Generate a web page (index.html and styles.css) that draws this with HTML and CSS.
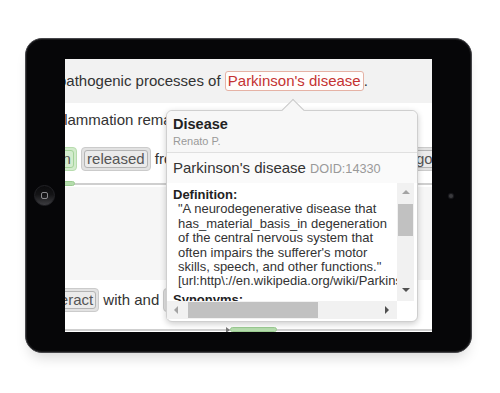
FILE: index.html
```html
<!DOCTYPE html>
<html>
<head>
<meta charset="utf-8">
<title>Annotation tablet</title>
<link rel="stylesheet" href="styles.css">
</head>
<body>
<div class="stage">
  <div class="tablet">
    <div class="bezel">
      <div class="home"><div class="home-key"></div></div>
    </div>
    <div class="screen">
      <div class="row row-1"><span class="lead-1">pathogenic processes of </span><span class="ent">Parkinson's disease</span>.</div>
      <div class="row row-2"><span class="lead-2">flammation remains a prominent feature</span></div>
      <div class="row row-3"><span class="tag tag-green lead-3"><span class="tag-in">protein</span></span> <span class="tag"><span class="tag-in">released</span></span> <span class="fill-text">from the damaged</span> <span class="tag"><span class="tag-in">golgi</span></span></div>
      <div class="track track-1"><span class="pill pill-1"></span></div>
      <div class="row row-4"></div>
      <div class="row row-5"><span class="tag lead-5"><span class="tag-in">interact</span></span> with and <span class="tag"><span class="tag-in">activate</span></span></div>
      <div class="track track-2"><span class="marker"></span><span class="pill pill-2"></span></div>

      <div class="popup">
        <div class="popup-arrow"></div>
        <div class="popup-head">
          <div class="popup-title">Disease</div>
          <div class="popup-author">Renato P.</div>
        </div>
        <div class="popup-term">Parkinson's disease <span class="doid">DOID:14330</span></div>
        <div class="popup-body">
          <div class="scroll-content">
            <div class="label">Definition:</div>
            <div class="def">"A neurodegenerative disease that<br>has_material_basis_in degeneration<br>of the central nervous system that<br>often impairs the sufferer's motor<br>skills, speech, and other functions."<br>[url:http\://en.wikipedia.org/wiki/Parkinsons_disease]</div>
            <div class="label label-syn">Synonyms:</div>
            <div class="def">paralysis agitans</div>
          </div>
          <div class="vbar">
            <div class="sb-btn"><span class="arr arr-up"></span></div>
            <div class="vthumb"></div>
            <div class="sb-space"></div>
            <div class="sb-btn sb-btn-down"><span class="arr arr-down"></span></div>
          </div>
          <div class="hbar">
            <div class="sb-btn sb-btn-h"><span class="arr arr-left"></span></div>
            <div class="hthumb"></div>
            <div class="sb-space"></div>
            <div class="sb-btn sb-btn-h sb-btn-right"><span class="arr arr-right"></span></div>
          </div>
          <div class="corner"></div>
        </div>
      </div>
    </div>
    <div class="bezel">
      <div class="camera"></div>
    </div>
  </div>
</div>
</body>
</html>
```

FILE: styles.css
```css
* { box-sizing: border-box; margin: 0; padding: 0; }
html, body { width: 500px; height: 393px; background: #fff; overflow: hidden; }
body { font-family: "Liberation Sans", Arial, sans-serif; color: #333; }

.stage { width: 500px; height: 393px; padding: 38px 0 0 25px; }

.tablet {
  display: flex;
  width: 447px;
  height: 315px;
  padding: 20px 0;
  background: #060608;
  border: 1px solid #46464a;
  border-radius: 17px;
  box-shadow: 0 9px 14px -5px rgba(0, 0, 0, 0.17), inset 0 0 0 1px #18181a;
}

.bezel { width: 39px; display: flex; align-items: center; justify-content: center; }

.home {
  width: 21px; height: 21px; border-radius: 50%;
  background: linear-gradient(#0b0b0d 0%, #141416 45%, #3c3c40 100%);
  border: 1px solid #222226;
  display: flex; align-items: center; justify-content: center;
  margin-left: -2px;
}
.home-key { width: 7px; height: 7px; border: 1px solid #8a8a8e; border-radius: 2px; }

.camera {
  width: 4px; height: 4px; border-radius: 50%;
  background: #3a3a3e; box-shadow: 0 0 1px 1px #1c1c20;
  margin-left: -1px;
}

.screen {
  position: relative;
  width: 367px;
  height: 273px;
  overflow: hidden;
  background: #fff;
  font-size: 15px;
  white-space: nowrap;
}

.row-1 { height: 44px; line-height: 44px; background: #f2f2f2; }
.row-2 { height: 34px; line-height: 33px; }
.row-3 { height: 43px; line-height: 43px; }
.row-4 { height: 93px; background: #f6f6f6; }
.row-5 { height: 47px; line-height: 40px; }

.lead-1 { margin-left: -7px; }
.lead-2 { margin-left: -5px; }
.lead-3 { margin-left: -46px; }
.lead-5 { margin-left: -27px; }

.ent {
  display: inline-block;
  vertical-align: middle;
  line-height: 18px;
  padding: 0 2px;
  color: #c43232;
  background: #fffdfc;
  border: 1px solid #e5b2a5;
  border-radius: 3px;
  margin-top: -2px;
}

.tag {
  display: inline-block;
  vertical-align: middle;
  margin-top: -2px;
  padding: 2px;
  line-height: 16px;
  background: #e2e2e2;
  border: 1px solid #cbcbcb;
  border-radius: 4px;
}
.tag-in {
  display: block;
  padding: 0 2px;
  color: #555;
  background: #ebebeb;
  border: 1px solid #b4b4b4;
  border-radius: 3px;
}
.tag-green { background: #d2ebcc; border-color: #b7dcae; }
.tag-green .tag-in { background: #d3ecce; border-color: #a3d399; }

.fill-text { display: inline-block; width: 251px; }

.track {
  height: 7px;
  background: linear-gradient(to bottom, transparent 3px, #cfcfcf 3px, #cfcfcf 5px, transparent 5px);
  display: flex;
  align-items: center;
}
.track-1 { background-color: #fff; }
.pill {
  display: block;
  height: 5px;
  border-radius: 3px;
  background: #b5dcad;
  border: 1px solid #9ccc92;
}
.pill-1 { width: 13px; margin-left: -3px; }
.track-2 {
  height: 5px;
  background: linear-gradient(to bottom, transparent 2px, #cfcfcf 2px, #cfcfcf 4px, transparent 4px);
}
.marker {
  width: 0; height: 0; margin-left: 161px;
  border-top: 3px solid transparent; border-bottom: 3px solid transparent;
  border-left: 4px solid #777;
}
.pill-2 { width: 47px; }

/* popup */
.popup {
  position: absolute;
  left: 101px;
  top: 51px;
  width: 252px;
  height: 212px;
  display: flex;
  flex-direction: column;
  background: #fff;
  border: 1px solid #cfcfcf;
  border-radius: 6px;
  box-shadow: 0 2px 6px rgba(0, 0, 0, 0.2);
  white-space: nowrap;
}
.popup-arrow {
  position: absolute;
  left: 118px;
  top: -9px;
  width: 16px;
  height: 16px;
  background: #f7f7f7;
  border-top: 1px solid #c9c9c9;
  border-left: 1px solid #c9c9c9;
  transform: rotate(45deg);
}
.popup-head {
  height: 42px;
  padding: 5px 6px 0;
  background: #f7f7f7;
  border-bottom: 1px solid #e0e0e0;
  border-radius: 6px 6px 0 0;
}
.popup-title { font-size: 14.5px; font-weight: bold; line-height: 17px; color: #222; }
.popup-author { font-size: 11px; line-height: 14px; color: #9a9a9a; margin-top: 1px; }

.popup-term {
  height: 30px;
  line-height: 30px;
  padding: 0 6px;
  font-size: 15px;
  color: #333;
  background: #fafafa;
}
.doid { font-size: 12.7px; color: #999; }

.popup-body {
  flex: 1;
  display: grid;
  grid-template-columns: 230px 17px;
  grid-template-rows: 118px 18px;
  padding: 0 3px 2px 0;
  overflow: hidden;
}
.scroll-content {
  overflow: hidden;
  padding: 5px 0 0 6px;
  font-size: 13px;
  line-height: 14.4px;
  color: #333;
}
.label { font-weight: bold; color: #222; }
.label-syn { margin-top: 4px; }
.def { padding-left: 5px; }

.vbar {
  display: flex;
  flex-direction: column;
  background: #f1f1f1;
}
.hbar {
  display: flex;
  background: #f1f1f1;
}
.sb-btn { height: 17px; display: flex; align-items: center; justify-content: center; flex: none; }
.sb-btn-down { margin-bottom: 3px; }
.sb-btn-h { width: 17px; height: 18px; }
.sb-btn-right { margin-right: 2px; }
.sb-space { flex: 1; }
.vthumb { height: 32px; margin: 4px 1px 0; background: #c1c1c1; flex: none; }
.hthumb { width: 130px; margin: 1px 0 1px 4px; background: #c1c1c1; flex: none; }
.corner { background: #fff; }

.arr { width: 0; height: 0; display: block; }
.arr-up { border-left: 4px solid transparent; border-right: 4px solid transparent; border-bottom: 4px solid #a3a3a3; }
.arr-down { border-left: 4px solid transparent; border-right: 4px solid transparent; border-top: 4px solid #505050; }
.arr-left { border-top: 4px solid transparent; border-bottom: 4px solid transparent; border-right: 4px solid #a3a3a3; }
.arr-right { border-top: 4px solid transparent; border-bottom: 4px solid transparent; border-left: 4px solid #505050; }
```
